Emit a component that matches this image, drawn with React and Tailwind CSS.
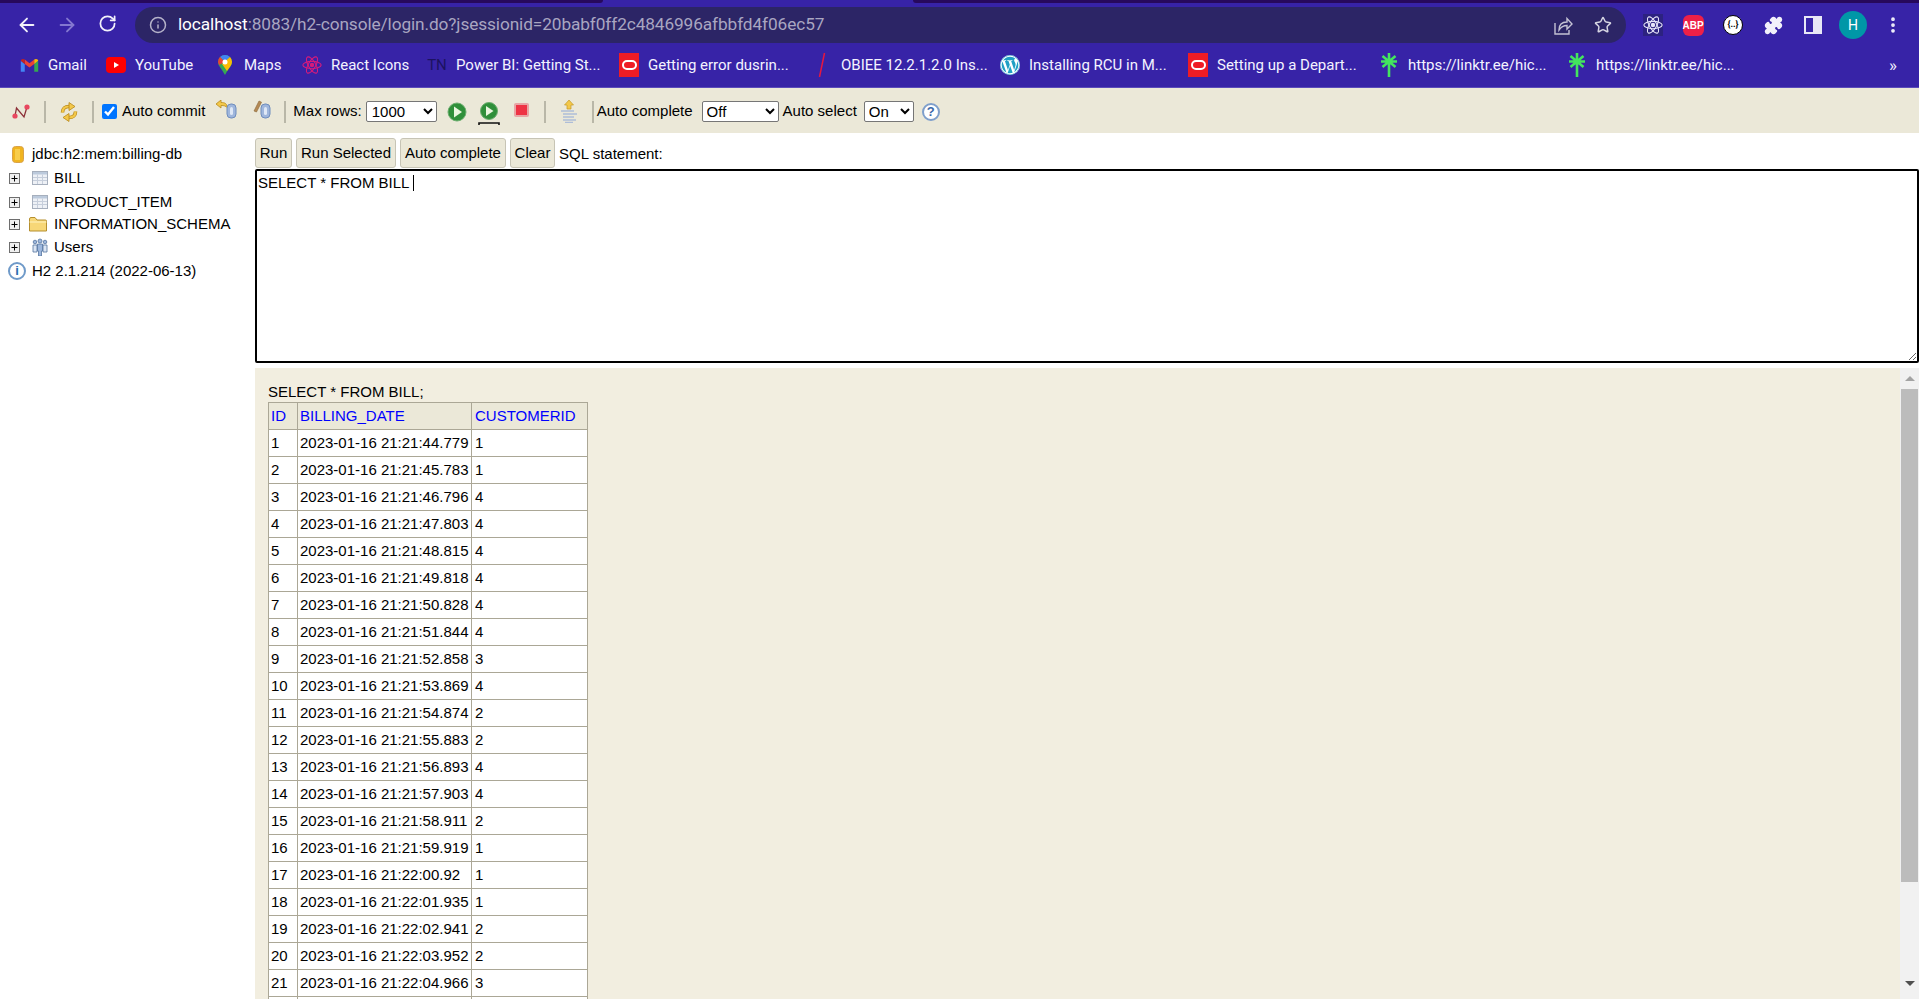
import React from 'react';
import { ArrowLeft, ArrowRight, RotateCw, Info, Star, MoreVertical, Puzzle } from 'lucide-react';
import { FaWordpress } from 'react-icons/fa';

const rows = [
  ['1', '2023-01-16 21:21:44.779', '1'],
  ['2', '2023-01-16 21:21:45.783', '1'],
  ['3', '2023-01-16 21:21:46.796', '4'],
  ['4', '2023-01-16 21:21:47.803', '4'],
  ['5', '2023-01-16 21:21:48.815', '4'],
  ['6', '2023-01-16 21:21:49.818', '4'],
  ['7', '2023-01-16 21:21:50.828', '4'],
  ['8', '2023-01-16 21:21:51.844', '4'],
  ['9', '2023-01-16 21:21:52.858', '3'],
  ['10', '2023-01-16 21:21:53.869', '4'],
  ['11', '2023-01-16 21:21:54.874', '2'],
  ['12', '2023-01-16 21:21:55.883', '2'],
  ['13', '2023-01-16 21:21:56.893', '4'],
  ['14', '2023-01-16 21:21:57.903', '4'],
  ['15', '2023-01-16 21:21:58.911', '2'],
  ['16', '2023-01-16 21:21:59.919', '1'],
  ['17', '2023-01-16 21:22:00.92', '1'],
  ['18', '2023-01-16 21:22:01.935', '1'],
  ['19', '2023-01-16 21:22:02.941', '2'],
  ['20', '2023-01-16 21:22:03.952', '2'],
  ['21', '2023-01-16 21:22:04.966', '3'],
  ['', '', ''],
];

const GmailIcon = () => (
  <svg width="19" height="15" viewBox="0 0 24 18">
    <path d="M1 17V3l5 4v10z" fill="#4285f4" />
    <path d="M23 17V3l-5 4v10z" fill="#34a853" />
    <path d="M6 7l6 4.5L18 7V1.5l-6 4.5-6-4.5z" fill="#ea4335" />
    <path d="M1 3c0-2 3-3 5-1.500V7z" fill="#c5221f" />
    <path d="M23 3c0-2-3-3-5-1.500V7z" fill="#fbbc04" />
  </svg>
);

const YoutubeIcon = () => (
  <svg width="20" height="16" viewBox="0 0 20 16">
    <rect width="20" height="16" rx="4" fill="#f00" />
    <path d="M8 5l5 3-5 3z" fill="#fff" />
  </svg>
);

const MapsIcon = () => (
  <svg width="14" height="20" viewBox="0 0 14 20">
    <path d="M7 0a7 7 0 0 1 7 7c0 4-4 7-7 13C4 14 0 11 0 7a7 7 0 0 1 7-7z" fill="#34a853" />
    <path d="M2 2a7 7 0 0 1 5-2 7 7 0 0 1 5 2L7 7z" fill="#4285f4" />
    <path d="M0 7a7 7 0 0 1 2-5l5 5-6 3z" fill="#ea4335" />
    <path d="M14 7c0 3-3 6-5 9L4 9l8-7a7 7 0 0 1 2 5z" fill="#fbbc04" />
    <circle cx="7" cy="7" r="2.500" fill="#fff" />
  </svg>
);

const ReactIcon = ({ color, size }) => (
  <svg width={size} height={size} viewBox="0 0 24 24" fill="none" stroke={color} strokeWidth="1.300">
    <ellipse cx="12" cy="12" rx="11" ry="4.400" />
    <ellipse cx="12" cy="12" rx="11" ry="4.400" transform="rotate(60 12 12)" />
    <ellipse cx="12" cy="12" rx="11" ry="4.400" transform="rotate(120 12 12)" />
    <circle cx="12" cy="12" r="2" fill={color} />
  </svg>
);

const OracleIcon = () => (
  <div className="w-[20px] h-[24px] bg-[#ee1c25] flex items-center justify-center">
    <div className="w-[15px] h-[10px] rounded-[5px] border-2 border-white" />
  </div>
);

const SlashIcon = () => (
  <svg width="10" height="24" viewBox="0 0 10 24">
    <path d="M7.500 0L2.500 24" stroke="#e8173f" strokeWidth="1.500" />
  </svg>
);

const WpIcon = () => (
  <div className="w-[20px] h-[20px] rounded-full bg-white flex items-center justify-center">
    <FaWordpress size={20} color="#1f9fc4" />
  </div>
);

const LinktreeIcon = () => (
  <svg width="18" height="24" viewBox="0 0 18 24" stroke="#43e55e" strokeWidth="2.600">
    <path d="M9 0v24M2.500 3l13 11M15.500 3l-13 11M1 8.500h16" />
  </svg>
);

const Bookmark = ({ icon, label, className }) => (
  <div className={`flex items-center shrink-0 ${className}`}>
    <div className="w-[20px] h-[24px] flex items-center justify-center">{icon}</div>
    <span className="ml-[9px] whitespace-nowrap text-[#f4f3ff]">{label}</span>
  </div>
);

const Separator = ({ className }) => <div className={`w-[2px] h-[22px] bg-[#b9b7a8] ${className}`} />;

const DisconnectIcon = () => (
  <svg width="18" height="18" viewBox="0 0 18 18" fill="none">
    <path d="M3 13L4.500 5l7.500 9L15 4" stroke="#8c3038" strokeWidth="1.300" />
    <circle cx="3" cy="13" r="2.600" fill="#e8475f" />
    <circle cx="15" cy="4" r="2.600" fill="#e8475f" />
  </svg>
);

const SyncArrow = ({ rotate }) => (
  <g transform={rotate ? 'rotate(180 10 10)' : undefined}>
    <path d="M3.500 10.500C3.500 6.500 6 4.500 10 4.500" fill="none" stroke="#b8891a" strokeWidth="3.600" />
    <path d="M3.500 10.500C3.500 6.500 6 4.500 10 4.500" fill="none" stroke="#f3c84a" strokeWidth="2.200" />
    <path d="M10 .5L16 4.500 10 8.500z" fill="#f3c84a" stroke="#b8891a" strokeWidth=".800" strokeLinejoin="round" />
  </g>
);

const RefreshIcon = () => (
  <svg width="20" height="20" viewBox="0 0 20 20">
    <SyncArrow />
    <SyncArrow rotate />
  </svg>
);

const Cylinder = ({ x }) => (
  <g transform={`translate(${x} 4)`}>
    <rect width="9" height="14" rx="4" fill="#9fb6dc" stroke="#6f8dbd" />
    <rect x="3" y="3" width="3" height="8" rx="1.500" fill="#dfe8f6" />
  </g>
);

const UndoZeroIcon = () => (
  <svg width="22" height="19" viewBox="0 0 22 19" fill="none">
    <path d="M1 4l5-4v2.500c4 0 6 1 6 5-1-1.500-3-2-6-2V8z" fill="#f3c84a" stroke="#b8891a" strokeWidth=".800" />
    <Cylinder x={12} />
  </svg>
);

const PencilZeroIcon = () => (
  <svg width="18" height="19" viewBox="0 0 18 19" fill="none">
    <path d="M1 11L6 1l2.500 1.200L3.500 12z" fill="#b58a55" stroke="#8a6636" strokeWidth=".600" />
    <Cylinder x={8} />
  </svg>
);

const RunIcon = () => (
  <svg width="20" height="20" viewBox="0 0 20 20">
    <circle cx="10" cy="10" r="9" fill="#2f8f3a" stroke="#6bae6e" />
    <path d="M7 4.500l8 5.500-8 5.500z" fill="#eaf6df" />
  </svg>
);

const RunSelectedIcon = () => (
  <svg width="22" height="24" viewBox="0 0 22 24" fill="none">
    <circle cx="11" cy="9" r="8.500" fill="#2f8f3a" stroke="#6bae6e" />
    <path d="M8 4l7.500 5L8 14z" fill="#eaf6df" />
    <path d="M1 23v-2h20v2" stroke="#111" strokeWidth="1.600" />
  </svg>
);

const StopIcon = () => (
  <div className="w-[15px] h-[14px] bg-[#ee3344] border-2 border-[#e8a5a5] rounded-[2px]" />
);

const HistoryIcon = () => (
  <svg width="16" height="23" viewBox="0 0 16 23" fill="none">
    <path d="M8 0l4.500 5H10v4H6V5H3.500z" fill="#f3c84a" stroke="#c49a2a" strokeWidth=".700" />
    <path d="M0 11h13M2 14h14M2 17h11M2 20h13M4 22.500h8" stroke="#aebdd8" strokeWidth="1.300" />
  </svg>
);

const HelpIcon = () => (
  <div className="w-[18px] h-[18px] rounded-full border-2 border-[#7f9fcb] bg-white flex items-center justify-center text-[13px] font-bold text-[#3b68a8] ml-[8px]">
    ?
  </div>
);

const PlusBox = () => (
  <svg width="11" height="11" viewBox="0 0 11 11" className="shrink-0">
    <rect x=".5" y=".5" width="10" height="10" fill="#f0f0f0" stroke="#6e6e6e" />
    <path d="M2.500 5.500h6M5.500 2.500v6" stroke="#000" />
  </svg>
);

const TableIcon = () => (
  <svg width="16" height="14" viewBox="0 0 16 14">
    <rect x=".5" y=".5" width="15" height="13" fill="#eef1f6" stroke="#a6afbd" />
    <rect x="1" y="1" width="14" height="2.500" fill="#bccadc" />
    <path d="M1 6.500h14M1 9.500h14M5.500 3.500V13M10.500 3.500V13" stroke="#c6cedb" />
  </svg>
);

const DbIcon = () => (
  <svg width="12" height="17" viewBox="0 0 12 17">
    <rect x=".5" y=".5" width="11" height="16" rx="3" fill="#f0b41f" stroke="#d8a24a" />
    <rect x="3" y="3" width="5" height="11" fill="#f8cd4c" />
  </svg>
);

const FolderIcon = () => (
  <svg width="18" height="15" viewBox="0 0 18 15" className="-ml-[4px] shrink-0">
    <path d="M.5 14V2q0-1.500 1.500-1.500h4L8 3h8.500q1 0 1 1v10z" fill="#f7d777" stroke="#b58f2e" />
    <path d="M.5 5h17" stroke="#fff3c0" />
  </svg>
);

const UsersIcon = () => (
  <svg width="16" height="18" viewBox="0 0 16 18" fill="#9db7dc" stroke="#54739f" strokeWidth=".800">
    <circle cx="3" cy="4" r="1.800" />
    <circle cx="13" cy="4" r="1.800" />
    <path d="M1 7h4v7H1zM11 7h4v7h-4z" fill="#dbe5f3" />
    <circle cx="8" cy="3" r="2" />
    <path d="M5.500 6h5v7h-1v5h-3v-5h-1z" />
  </svg>
);

const InfoIcon = () => (
  <div className="w-[18px] h-[18px] rounded-full border-2 border-[#6f9ac9] bg-white flex items-center justify-center text-[13px] font-bold text-[#2a6bb0]">
    i
  </div>
);

const TreeRow = ({ icon, label, className }) => (
  <div className={`flex items-center pl-[9px] ${className}`}>
    <PlusBox />
    <div className="w-[16px] ml-[12px] flex justify-center shrink-0">{icon}</div>
    <span className="ml-[6px] whitespace-nowrap">{label}</span>
  </div>
);

const SqlButton = ({ children, className }) => (
  <button className={`h-[30px] bg-[#ebe8d8] border border-[#c7c4b5] rounded-[3px] flex items-center justify-center text-black ${className}`}>
    {children}
  </button>
);

const App = () => {
  return (
    <div className="w-screen h-screen overflow-hidden flex flex-col bg-white text-black text-[15px] font-['Liberation_Sans',Arial,sans-serif]">
      {/* Browser chrome */}
      <div className="shrink-0 h-[88px] bg-[#3723a7] border-b border-[#5b4bbb] flex flex-col font-['Roboto',sans-serif]">
        <div className="flex h-[3px] shrink-0">
          <div className="w-[603px] bg-[#27095c] rounded-br-[3px]" />
          <div className="w-[310px]" />
          <div className="flex-1 bg-[#27095c] rounded-bl-[3px]" />
        </div>
        <div className="flex items-center h-[36px] mt-[4px] shrink-0">
          <div className="flex pl-[7px] w-[135px] shrink-0 text-[#f2f1fb]">
            <div className="w-[40px] flex justify-center"><ArrowLeft size={22} strokeWidth={2} /></div>
            <div className="w-[40px] flex justify-center text-[#8478d0]"><ArrowRight size={22} strokeWidth={2} /></div>
            <div className="w-[40px] flex justify-center"><RotateCw size={19} strokeWidth={2.2} /></div>
          </div>
          <div className="w-[1491px] h-[36px] shrink-0 rounded-full bg-[#2c2566] flex items-center pl-[14px] pr-[3px]">
            <Info size={18} className="text-[#b5b2c9] shrink-0" />
            <div className="ml-[11px] text-[17.25px] whitespace-nowrap tracking-[-0.1px]">
              <span className="text-white">localhost</span>
              <span className="text-[#a9a6c1]">:8083/h2-console/login.do?jsessionid=20babf0ff2c4846996afbbfd4f06ec57</span>
            </div>
            <div className="ml-auto w-[40px] flex justify-center text-[#c4c2d4]">
              <svg width="19" height="19" viewBox="0 0 19 19" fill="none" stroke="currentColor" strokeWidth="1.400">
                <path d="M1 7v11h14v-4" />
                <path d="M5 14c0-5 3-8 8-8V2.500l5 5.500-5 5V9.500c-4 0-6 1.500-8 4.500z" />
              </svg>
            </div>
            <div className="w-[40px] flex justify-center text-[#d6d5e2]"><Star size={18} strokeWidth={2} /></div>
          </div>
          <div className="flex items-center ml-[7px] text-[#f2f1fb]">
            <div className="w-[40px] flex justify-center">
              <div className="w-[20px] h-[22px] bg-[#2c2280] flex items-center justify-center"><ReactIcon color="#e6e4f8" size={20} /></div>
            </div>
            <div className="w-[40px] flex justify-center">
              <div className="w-[21px] h-[21px] rounded-[6px] bg-[#ee2047] flex items-center justify-center text-[10px] font-bold text-white font-['Liberation_Sans']">ABP</div>
            </div>
            <div className="w-[40px] flex justify-center">
              <div className="w-[20px] h-[20px] rounded-full bg-white border border-black flex items-center justify-center text-[9px] text-black font-bold">{'{..}'}</div>
            </div>
            <div className="w-[40px] flex justify-center"><Puzzle size={19} fill="currentColor" /></div>
            <div className="w-[40px] flex justify-center">
              <div className="w-[18px] h-[18px] border-2 border-[#e8e7f6] flex justify-end"><div className="w-[7px] bg-[#e8e7f6]" /></div>
            </div>
            <div className="w-[40px] flex justify-center">
              <div className="w-[28px] h-[28px] rounded-full bg-[#0097a7] text-white text-[14px] flex items-center justify-center">H</div>
            </div>
            <div className="w-[40px] flex justify-center"><MoreVertical size={20} strokeWidth={2.5} /></div>
          </div>
        </div>
        <div className="flex items-center flex-1 pl-[19px] text-[15px]">
          <Bookmark className="w-[87px]" icon={<GmailIcon />} label="Gmail" />
          <Bookmark className="w-[109px]" icon={<YoutubeIcon />} label="YouTube" />
          <Bookmark className="w-[87px]" icon={<MapsIcon />} label="Maps" />
          <Bookmark className="w-[125px]" icon={<ReactIcon color="#d81b7a" size={20} />} label="React Icons" />
          <Bookmark className="w-[192px]" icon={<span className="text-[#1c1260] text-[15px]">TN</span>} label="Power BI: Getting St..." />
          <Bookmark className="w-[193px]" icon={<OracleIcon />} label="Getting error dusrin..." />
          <Bookmark className="w-[188px]" icon={<SlashIcon />} label="OBIEE 12.2.1.2.0 Ins..." />
          <Bookmark className="w-[188px]" icon={<WpIcon />} label="Installing RCU in M..." />
          <Bookmark className="w-[191px]" icon={<OracleIcon />} label="Setting up a Depart..." />
          <Bookmark className="w-[188px]" icon={<LinktreeIcon />} label="https://linktr.ee/hic..." />
          <Bookmark className="w-[188px]" icon={<LinktreeIcon />} label="https://linktr.ee/hic..." />
          <span className="ml-auto mr-[22px] text-[#f4f3ff] text-[17px] leading-none">»</span>
        </div>
      </div>

      {/* H2 toolbar */}
      <div className="shrink-0 h-[45px] bg-[#ebe8d8] flex items-center pl-[12px] pt-[2px] whitespace-nowrap">
        <DisconnectIcon />
        <Separator className="ml-[14px]" />
        <div className="ml-[13px]"><RefreshIcon /></div>
        <Separator className="ml-[13px]" />
        <input type="checkbox" defaultChecked className="ml-[8px] w-[15px] h-[15px] accent-[#0075ff]" />
        <span className="ml-[5px]">Auto commit</span>
        <div className="ml-[10px] -mt-[4px]"><UndoZeroIcon /></div>
        <div className="ml-[16px] -mt-[4px]"><PencilZeroIcon /></div>
        <Separator className="ml-[13px]" />
        <span className="ml-[7px]">Max rows:</span>
        <select defaultValue="1000" className="ml-[4px] w-[71px] h-[21px] bg-white border border-[#767676] rounded-[2px] pl-[1px] text-[15px]">
          <option>1000</option>
        </select>
        <div className="ml-[10px]"><RunIcon /></div>
        <div className="ml-[11px] mt-[4px]"><RunSelectedIcon /></div>
        <div className="ml-[14px] -mt-[4px]"><StopIcon /></div>
        <Separator className="ml-[15px]" />
        <div className="ml-[15px]"><HistoryIcon /></div>
        <Separator className="ml-[15px]" />
        <span className="ml-[3px]">Auto complete</span>
        <select defaultValue="Off" className="ml-[9px] w-[77px] h-[21px] bg-white border border-[#767676] rounded-[2px] text-[15px]">
          <option>Off</option>
        </select>
        <span className="ml-[4px]">Auto select</span>
        <select defaultValue="On" className="ml-[7px] w-[50px] h-[21px] bg-white border border-[#767676] rounded-[2px] text-[15px]">
          <option>On</option>
        </select>
        <HelpIcon />
      </div>

      <div className="flex flex-1 min-h-0">
        {/* Tree */}
        <div className="w-[255px] shrink-0 pt-[9px] whitespace-nowrap">
          <div className="flex items-center h-[24px] pl-[12px]">
            <DbIcon />
            <span className="ml-[8px]">jdbc:h2:mem:billing-db</span>
          </div>
          <TreeRow className="h-[24px]" icon={<TableIcon />} label="BILL" />
          <TreeRow className="h-[24px]" icon={<TableIcon />} label="PRODUCT_ITEM" />
          <TreeRow className="h-[20px]" icon={<FolderIcon />} label="INFORMATION_SCHEMA" />
          <TreeRow className="h-[26px]" icon={<UsersIcon />} label="Users" />
          <div className="flex items-center h-[22px] pl-[8px]">
            <InfoIcon />
            <span className="ml-[6px]">H2 2.1.214 (2022-06-13)</span>
          </div>
        </div>

        {/* Query and results */}
        <div className="flex-1 min-w-0 flex flex-col">
          <div className="flex items-center h-[36px] shrink-0 pt-[5px] pb-[1px] gap-[4px]">
            <SqlButton className="w-[37px]">Run</SqlButton>
            <SqlButton className="w-[100px]">Run Selected</SqlButton>
            <SqlButton className="w-[106px]">Auto complete</SqlButton>
            <SqlButton className="w-[45px]">Clear</SqlButton>
            <span className="mt-[2px]">SQL statement:</span>
          </div>
          <div className="relative h-[194px] shrink-0">
            <textarea
              defaultValue="SELECT * FROM BILL "
              spellCheck={false}
              className="block w-full h-full border-2 border-black rounded-[2px] outline-none pl-[1px] pt-[3px] text-[15px] leading-[17px] caret-transparent font-['Liberation_Sans',Arial,sans-serif]"
            />
            <div className="absolute left-[158px] top-[6px] w-px h-[16px] bg-black" />
          </div>
          <div className="flex flex-1 min-h-0 mt-[5px]">
            <div className="flex-1 min-w-0 bg-[#f2eee0] pl-[13px] pt-[14px] overflow-hidden">
              <div className="h-[20px] leading-[20px]">SELECT * FROM BILL;</div>
              <table className="table-fixed w-[319px] border-collapse">
                <thead>
                  <tr className="h-[27px] bg-[#ebe8d8] text-[#0000ff]">
                    <th className="w-[29px] border border-[#aba796] pl-[2px] text-left font-normal">ID</th>
                    <th className="w-[174px] border border-[#aba796] pl-[2px] text-left font-normal">BILLING_DATE</th>
                    <th className="w-[116px] border border-[#aba796] pl-[3px] text-left font-normal">CUSTOMERID</th>
                  </tr>
                </thead>
                <tbody>
                  {rows.map((row, i) => (
                    <tr key={i} className="h-[27px] bg-white">
                      <td className="border border-[#aba796] pl-[2px]">{row[0]}</td>
                      <td className="border border-[#aba796] pl-[2px] whitespace-nowrap">{row[1]}</td>
                      <td className="border border-[#aba796] pl-[3px]">{row[2]}</td>
                    </tr>
                  ))}
                </tbody>
              </table>
            </div>
            {/* Scrollbar */}
            <div className="w-[19px] shrink-0 bg-[#f1f1f1] flex flex-col items-center">
              <div className="h-[21px] flex items-center justify-center shrink-0">
                <div className="w-0 h-0 border-x-[5px] border-x-transparent border-b-[5px] border-b-[#a3a3a3]" />
              </div>
              <div className="w-[17px] h-[493px] shrink-0 bg-[#bcbcbc]" />
              <div className="mt-auto h-[18px] flex items-start justify-center shrink-0">
                <div className="w-0 h-0 border-x-[5px] border-x-transparent border-t-[5px] border-t-[#505050]" />
              </div>
            </div>
          </div>
        </div>
      </div>
    </div>
  );
};

export default App;
